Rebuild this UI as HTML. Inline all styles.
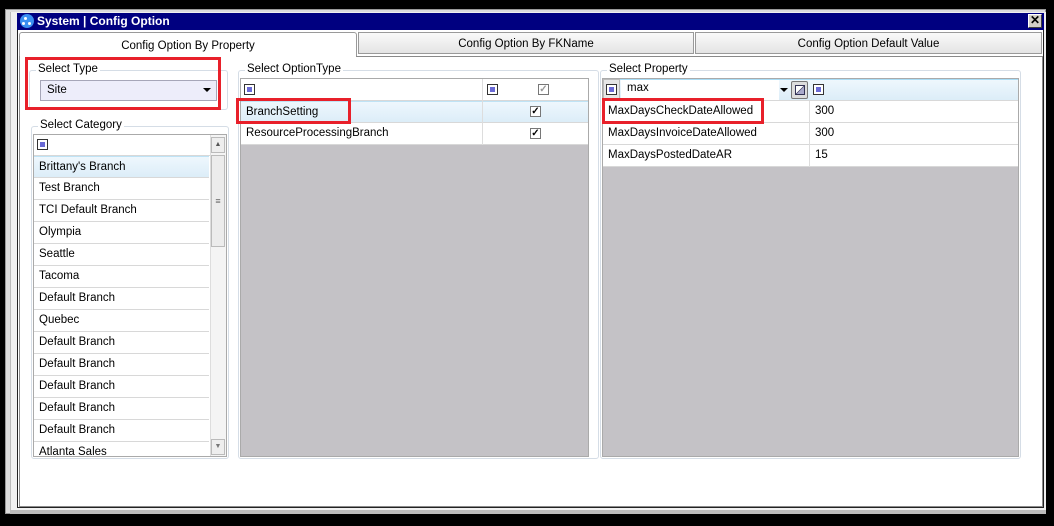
<!DOCTYPE html>
<html><head><meta charset="utf-8"><style>
*{margin:0;padding:0;box-sizing:border-box}
body{width:1054px;height:526px;background:#000;position:relative;overflow:hidden;font-family:"Liberation Sans",sans-serif;font-size:11.5px;color:#000}
.a{position:absolute}
.win{left:5px;top:9px;width:1041px;height:505px;background:#dcdcdc;border:1px solid #999}
.grp{position:absolute;border:1px solid #d5dde6;border-radius:3px}
.lbl{position:absolute;top:-8px;left:6px;background:#fff;padding:0 2px;font-size:11.5px}
.row{position:absolute;left:0;right:0;height:22px;border-bottom:1px solid #d8d8d8;background:#fff;line-height:21px;padding-left:5px}
.sel{background:linear-gradient(#eef7fd,#dcedf8);border-top:1px solid #bfe3f5}
.cb{position:absolute;width:11px;height:11px;border:1px solid #333;background:#fff}
.cb::after{content:"";position:absolute;left:2px;top:2px;width:5px;height:5px;background:#6a6ad6}
.chk{position:absolute;width:11px;height:11px;border:1px solid #777;background:#fff;font-size:10px;line-height:9px;text-align:center;font-weight:bold}
.red{position:absolute;border:3px solid #e8202a}
.tab{position:absolute;top:32px;height:22px;background:linear-gradient(#fafafa,#e4e4e4);border:1px solid #9a9a9a;text-align:center;line-height:22px;font-size:11.5px}
</style></head><body>
<div class="a win"></div>
<div class="a" style="left:10px;top:12px;width:1036px;height:498px;background:#f0f0f0;border-left:1px solid #bbb"></div>
<div class="a" style="left:17px;top:13px;width:1027px;height:17px;background:#000080"></div>
<div class="a" style="left:20px;top:14px;width:14px;height:14px;border-radius:50%;background:#3b8ff0"></div>
<div class="a" style="left:24px;top:17px;width:3px;height:3px;background:#fff;border-radius:50%"></div>
<div class="a" style="left:22px;top:22px;width:3px;height:3px;background:#fff;border-radius:50%"></div>
<div class="a" style="left:28px;top:22px;width:3px;height:3px;background:#fff;border-radius:50%"></div>
<div class="a" style="left:37px;top:14px;color:#fff;font-weight:bold;font-size:12px">System | Config Option</div>
<div class="a" style="left:1028px;top:14px;width:14px;height:14px;background:#d4d0c8;border:1px solid #fff;border-right-color:#404040;border-bottom-color:#404040;font-size:12px;line-height:11px;text-align:center;font-weight:bold">✕</div>
<div class="a" style="left:17px;top:30px;width:1027px;height:478px;background:#fff;border:1px solid #222;border-top:none"></div>
<div class="tab" style="left:358px;width:336px">Config Option By FKName</div>
<div class="tab" style="left:695px;width:347px">Config Option Default Value</div>
<div class="tab" style="left:19px;width:338px;top:32px;height:25px;background:#fff;border-bottom:none;border-radius:3px 3px 0 0;line-height:26px">Config Option By Property</div>
<div class="a" style="left:19px;top:56px;width:1024px;height:451px;border:1px solid #8a8a8a;border-top:none"></div>
<div class="a" style="left:19px;top:56px;width:1024px;height:1px;background:#8a8a8a"></div>
<div class="a" style="left:20px;top:56px;width:336px;height:2px;background:#fff"></div>

<!-- Select Type -->
<div class="grp" style="left:29px;top:70px;width:199px;height:40px"><span class="lbl">Select Type</span></div>
<div class="a" style="left:40px;top:80px;width:177px;height:21px;background:#ededfa;border:1px solid #a6a6b8;line-height:19px;padding-left:6px">Site</div>
<div class="a" style="left:203px;top:88px;width:0;height:0;border-left:4px solid transparent;border-right:4px solid transparent;border-top:4px solid #000"></div>
<div class="red" style="left:25px;top:57px;width:196px;height:53px"></div>

<!-- Select Category -->
<div class="grp" style="left:31px;top:126px;width:198px;height:333px"><span class="lbl">Select Category</span></div>
<div class="a" style="left:33px;top:134px;width:194px;height:323px;background:#fff;border:1px solid #aaa;overflow:hidden">
<div class="row" style="top:0;height:21px"><div class="cb" style="left:3px;top:4px"></div></div>
<div class="row sel" style="top:21px;right:17px">Brittany's Branch</div>
<div class="row" style="top:43px;right:17px">Test Branch</div>
<div class="row" style="top:65px;right:17px">TCI Default Branch</div>
<div class="row" style="top:87px;right:17px">Olympia</div>
<div class="row" style="top:109px;right:17px">Seattle</div>
<div class="row" style="top:131px;right:17px">Tacoma</div>
<div class="row" style="top:153px;right:17px">Default Branch</div>
<div class="row" style="top:175px;right:17px">Quebec</div>
<div class="row" style="top:197px;right:17px">Default Branch</div>
<div class="row" style="top:219px;right:17px">Default Branch</div>
<div class="row" style="top:241px;right:17px">Default Branch</div>
<div class="row" style="top:263px;right:17px">Default Branch</div>
<div class="row" style="top:285px;right:17px">Default Branch</div>
<div class="row" style="top:307px;right:17px">Atlanta Sales</div>
<div class="a" style="left:176px;top:0;width:16px;height:321px;background:#f4f4f4;border-left:1px solid #ddd"></div>
<div class="a" style="left:177px;top:2px;width:14px;height:16px;background:#eee;border:1px solid #bbb;font-size:7px;text-align:center;line-height:14px;color:#555">▲</div>
<div class="a" style="left:177px;top:20px;width:14px;height:92px;background:#ececec;border:1px solid #bbb;font-size:9px;text-align:center;line-height:90px;color:#666">≡</div>
<div class="a" style="left:177px;top:304px;width:14px;height:16px;background:#eee;border:1px solid #bbb;font-size:7px;text-align:center;line-height:14px;color:#777">▼</div>
</div>

<!-- Select OptionType -->
<div class="grp" style="left:238px;top:70px;width:361px;height:389px"><span class="lbl">Select OptionType</span></div>
<div class="a" style="left:240px;top:78px;width:349px;height:379px;background:#c4c2c6;border:1px solid #aaa;overflow:hidden">
<div class="row" style="top:0;height:22px"><div class="cb" style="left:3px;top:5px"></div><div class="cb" style="left:246px;top:5px"></div><div class="chk" style="left:297px;top:5px;color:#999">✓</div></div>
<div class="row sel" style="top:22px">BranchSetting</div>
<div class="row" style="top:44px">ResourceProcessingBranch</div>
<div class="a" style="left:241px;top:0;width:1px;height:66px;background:#ddd"></div>
<div class="chk" style="left:289px;top:27px">✓</div>
<div class="chk" style="left:289px;top:49px">✓</div>
</div>
<div class="red" style="left:236px;top:98px;width:115px;height:26px"></div>

<!-- Select Property -->
<div class="grp" style="left:600px;top:70px;width:421px;height:389px"><span class="lbl">Select Property</span></div>
<div class="a" style="left:602px;top:78px;width:417px;height:379px;background:#c4c2c6;border:1px solid #aaa;overflow:hidden">
<div class="row" style="top:0;height:22px;background:linear-gradient(#eef7fd,#dcedf8);border-top:1px solid #a8dcf5"></div>
<div class="a" style="left:0;top:0;width:17px;height:22px;background:#e6e6e6;border:1px solid #bbb"></div>
<div class="cb" style="left:3px;top:5px"></div>
<div class="a" style="left:18px;top:1px;width:158px;height:20px;background:#fff;padding-left:6px;line-height:16px">max</div>
<div class="a" style="left:177px;top:9px;border-left:4px solid transparent;border-right:4px solid transparent;border-top:4px solid #000"></div>
<div class="a" style="left:188px;top:2px;width:17px;height:18px;background:#ddd;border:1px solid #777;border-radius:2px"><div class="a" style="left:3px;top:3px;width:10px;height:10px;border:1px solid #335;background:linear-gradient(135deg,#fff 45%,#335 50%,#aac 55%)"></div></div>
<div class="cb" style="left:210px;top:5px"></div>
<div class="row" style="top:22px;background:#fff">MaxDaysCheckDateAllowed</div>
<div class="row" style="top:44px">MaxDaysInvoiceDateAllowed</div>
<div class="row" style="top:66px">MaxDaysPostedDateAR</div>
<div class="a" style="left:206px;top:22px;width:1px;height:66px;background:#ddd"></div>
<div class="a" style="left:212px;top:22px;line-height:21px">300</div>
<div class="a" style="left:212px;top:44px;line-height:21px">300</div>
<div class="a" style="left:212px;top:66px;line-height:21px">15</div>
</div>
<div class="red" style="left:602px;top:98px;width:162px;height:26px"></div>
<div class="a" style="left:10px;top:510px;width:1036px;height:4px;background:#bbb"></div>
</body></html>
